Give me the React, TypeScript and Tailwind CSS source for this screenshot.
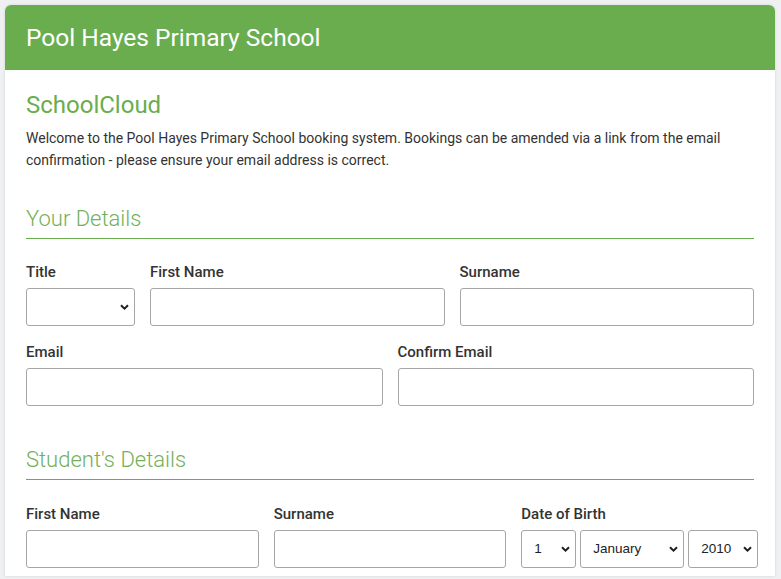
import React from 'react';

const ff = { fontFamily: 'Roboto, "Liberation Sans", sans-serif' };

function Chevron() {
  return (
    <svg width="9" height="6" viewBox="0 0 9 6" className="pointer-events-none absolute right-[5px] top-1/2 -translate-y-1/2">
      <path d="M1 1.2 L4.5 4.6 L8 1.2" fill="none" stroke="#1f1f1f" strokeWidth="2" />
    </svg>
  );
}

function Select({ value, className }: { value: string; className: string }) {
  return (
    <div className={`relative h-[38px] rounded-[3px] border border-[#a6a6a6] bg-white ${className}`}>
      <span className="absolute left-[12px] top-1/2 -translate-y-1/2 font-['Liberation_Sans',Arial,sans-serif] text-[13.5px] text-[#222]">
        {value}
      </span>
      <Chevron />
    </div>
  );
}

function Label({ children }: { children: React.ReactNode }) {
  return <label className="mb-[5px] text-[15px] font-medium leading-[22px] text-[#333]">{children}</label>;
}

function Field({ label, className }: { label: string; className: string }) {
  return (
    <div className={`flex flex-col ${className}`}>
      <Label>{label}</Label>
      <div className="h-[38px] rounded-[3px] border border-[#a6a6a6] bg-white" />
    </div>
  );
}

function SectionTitle({ children }: { children: React.ReactNode }) {
  return (
    <div>
      <h2 className="pb-[6px] text-[22px] font-light leading-[26px] text-[#74b05a]">{children}</h2>
      <div className="h-px bg-[#6aad4e]" />
    </div>
  );
}

export default function App() {
  return (
    <div className="min-h-screen bg-[#eef0f1] pl-[5px] pr-[6px] pt-[5px]" style={ff}>
      <div className="overflow-hidden rounded-t-[6px] bg-white shadow-[0_0_3px_rgba(0,0,0,0.12)]">
        {/* header */}
        <div className="flex h-[65px] items-center bg-[#6aad4e] px-[21px]">
          <h1 className="pt-[1px] text-[24.5px] leading-[28px] text-white">Pool Hayes Primary School</h1>
        </div>

        <div className="px-[21px] pt-5 pb-2">
          <h2 className="pt-[1px] text-[24px] leading-[28px] text-[#6aad4e]">SchoolCloud</h2>
          <p className="mt-[8px] text-[14px] leading-[22px] text-[#333]">
            Welcome to the Pool Hayes Primary School booking system. Bookings can be amended via a link from the email confirmation - please ensure your email address is correct.
          </p>

          {/* your details */}
          <div className="mt-[35px]">
            <SectionTitle>Your Details</SectionTitle>
          </div>

          <div className="mt-[22px] flex gap-[15px]">
            <div className="flex w-[109px] flex-col">
              <Label>Title</Label>
              <Select value="" className="w-full" />
            </div>
            <Field label="First Name" className="flex-1" />
            <Field label="Surname" className="flex-1" />
          </div>

          <div className="mt-[15px] grid grid-cols-2 gap-[15px]">
            <Field label="Email" className="" />
            <Field label="Confirm Email" className="" />
          </div>

          {/* student */}
          <div className="mt-[41px]">
            <SectionTitle>Student's Details</SectionTitle>
          </div>

          <div className="mt-[23px] grid grid-cols-3 gap-[15px]">
            <Field label="First Name" className="" />
            <Field label="Surname" className="" />
            <div className="flex flex-col">
              <Label>Date of Birth</Label>
              <div className="flex gap-[4px]">
                <Select value="1" className="w-[55px] shrink-0" />
                <Select value="January" className="w-[104px] shrink-0" />
                <Select value="2010" className="w-[70px] shrink-0" />
              </div>
            </div>
          </div>
        </div>
      </div>
    </div>
  );
}
